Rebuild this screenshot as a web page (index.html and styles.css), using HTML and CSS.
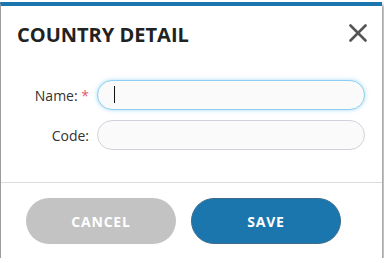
FILE: index.html
```html
<!DOCTYPE html>
<html lang="en">
<head>
  <meta charset="UTF-8">
  <title>Country Detail</title>
  <link rel="stylesheet" href="styles.css">
</head>
<body>

  <!-- Country detail dialog -->
  <div class="dialog">
    <div class="dialog-header">
      <h1>COUNTRY DETAIL</h1>
      <button class="close-btn" aria-label="Close">
        <svg width="18" height="18" viewBox="0 0 18 18">
          <path d="M1.5 1.5 L16.5 16.5 M16.5 1.5 L1.5 16.5" stroke="#555" stroke-width="2.6" stroke-linecap="round" fill="none"/>
        </svg>
      </button>
    </div>

    <div class="dialog-body">
      <div class="form-row">
        <label for="name">Name: <span class="required">*</span></label>
        <div class="field">
          <input id="name" class="input focused" type="text">
          <span class="caret"></span>
        </div>
      </div>
      <div class="form-row">
        <label for="code">Code:</label>
        <div class="field">
          <input id="code" class="input" type="text">
        </div>
      </div>
    </div>

    <div class="dialog-footer">
      <button class="btn btn-cancel">CANCEL</button>
      <button class="btn btn-save">SAVE</button>
    </div>
  </div>

</body>
</html>
```

FILE: styles.css
```css
* {
  box-sizing: border-box;
}

body {
  margin: 0;
  padding: 2px 0 0 0;
  background: #fff;
  font-family: 'Open Sans', sans-serif;
  color: #333;
  overflow: hidden;
}

.dialog {
  width: 382px;
  height: 256px;
  background: #fff;
  border-top: 4px solid #1a76ad;
  border-left: 1px solid #9c9c9c;
  box-shadow: 2px 3px 3px #9a9a9a;
  display: flex;
  flex-direction: column;
}

.dialog-header {
  display: flex;
  justify-content: space-between;
  align-items: flex-start;
  padding: 17px 15px 0 16px;
}

.dialog-header h1 {
  margin: 0;
  font-size: 20px;
  line-height: 24px;
  font-weight: 700;
  color: #222;
}

.close-btn {
  border: none;
  background: none;
  padding: 0;
  margin-top: 1px;
  cursor: pointer;
  line-height: 0;
}

.dialog-body {
  padding: 33px 17px 32px 0;
  display: flex;
  flex-direction: column;
  gap: 10px;
}

.form-row {
  display: flex;
  align-items: center;
  gap: 8px;
}

.form-row label {
  width: 88px;
  text-align: right;
  font-size: 14px;
  color: #333;
  white-space: nowrap;
}

.required {
  color: #e05a6c;
}

.field {
  position: relative;
  flex: 1;
}

.input {
  display: block;
  width: 100%;
  height: 30px;
  border: 1px solid #d3d1dc;
  border-radius: 15px;
  background: #fafafa;
  outline: none;
  padding: 0 16px;
  font-family: 'Open Sans', sans-serif;
  font-size: 14px;
}

.input.focused {
  border-color: #8bd0f0;
  box-shadow: 0 0 4px rgba(110, 195, 240, 0.6);
}

.caret {
  position: absolute;
  left: 17px;
  top: 6px;
  width: 1px;
  height: 17px;
  background: #111;
}

.dialog-footer {
  border-top: 1px solid #ddd;
  padding: 15px 0 0 25px;
  display: flex;
  gap: 15px;
}

.btn {
  width: 150px;
  height: 46px;
  border-radius: 23px;
  border: none;
  font-family: 'Open Sans', sans-serif;
  font-size: 14px;
  font-weight: 700;
  letter-spacing: 0.8px;
  color: #fff;
  cursor: pointer;
}

.btn-cancel {
  background: #c3c3c3;
}

.btn-save {
  background: #1a76ad;
  border: 1px solid #3d6d8c;
}
```
